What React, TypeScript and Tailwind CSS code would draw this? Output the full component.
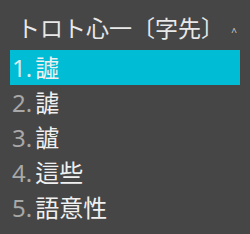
const items = ["譃", "謔", "謯", "這些", "語意性"];

export default function App() {
  return (
    <div
      className="h-[234px] w-[250px] overflow-hidden bg-[#464646] text-[#e8e8e8]"
      style={{ fontFamily: '"Noto Sans", "Noto Sans CJK JP", sans-serif' }}
    >
      <div className="flex h-[50px] items-center pl-[17px] pr-[13px] pt-[5px]">
        <span className="text-[23px] leading-[30px]">トロト心一〔字先〕</span>
        <span className="ml-auto mt-[8px] text-[10px] leading-none text-[#cfcfcf]">^</span>
      </div>
      <div className="flex flex-col">
        {items.map((w, i) => (
          <div
            key={i}
            className={
              i === 0
                ? "mx-[10px] flex h-[35px] items-center bg-[#00bcd4] pl-[2px]"
                : "mx-[10px] flex h-[35px] items-center pl-[2px]"
            }
          >
            <span className={i === 0 ? "text-[24px] leading-[35px] text-[#d8eef2]" : "text-[24px] leading-[35px] text-[#a8a8a8]"}>
              {i + 1}.
            </span>
            <span className="ml-[3px] text-[24px] leading-[35px] text-[#f0f0f0]">{w}</span>
          </div>
        ))}
      </div>
    </div>
  );
}
